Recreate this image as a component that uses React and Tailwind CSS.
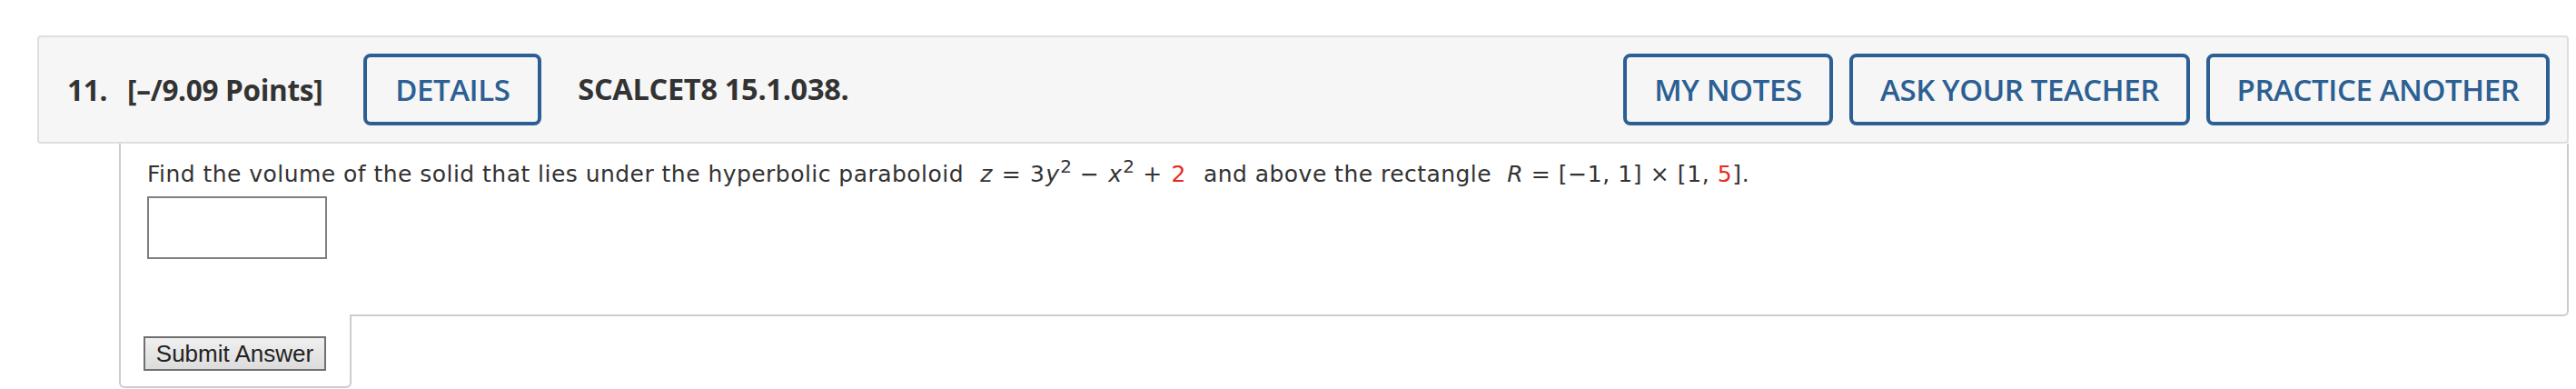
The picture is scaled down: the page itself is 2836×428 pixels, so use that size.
import React from "react";

const blueBtn =
  "flex items-center justify-center h-[79px] border-[4px] border-[#2c5f93] rounded-[8px] text-[#2c5f93] font-semibold text-[33px] tracking-[-0.4px] bg-[#f6f6f6]";

export default function App() {
  return (
    <div className="w-[2836px] h-[428px] overflow-hidden bg-white pt-[39px] pl-[41px] pr-[8px]">
      {/* Header */}
      <div
        className="h-[119px] border-2 border-[#dedede] rounded-[4px] bg-[#f6f6f6] flex items-center pl-[31px] pr-[19px] text-[#333333]"
        style={{ fontFamily: '"Open Sans", sans-serif' }}
      >
        <span className="font-bold text-[31.5px] tracking-[-0.3px]">11.</span>
        <span className="font-bold text-[31.5px] tracking-[-0.3px] ml-[22px]">[–/9.09 Points]</span>
        <div className={`${blueBtn} w-[196px] ml-[45px]`}>DETAILS</div>
        <span className="font-bold text-[32.5px] tracking-[-0.3px] ml-[40px]">SCALCET8 15.1.038.</span>
        <div className="ml-auto flex items-center gap-[18px]">
          <div className={`${blueBtn} w-[231px]`}>MY NOTES</div>
          <div className={`${blueBtn} w-[375px]`}>ASK YOUR TEACHER</div>
          <div className={`${blueBtn} w-[378px]`}>PRACTICE ANOTHER</div>
        </div>
      </div>

      {/* Body */}
      <div className="ml-[90px]" style={{ fontFamily: '"DejaVu Sans", Verdana, sans-serif' }}>
        <div className="h-[190px] border-x-2 border-b-2 border-[#cccccc] rounded-br-[6px] pl-[29px] pt-[14px] text-[#333333] text-[25px] tracking-[0.46px]">
          <p className="leading-[40px]">
            Find the volume of the solid that lies under the hyperbolic paraboloid
            <span className="whitespace-pre tracking-[1.2px]">
              {"  "}
              <i>z</i> = 3<i>y</i>
              <sup className="text-[20px] tracking-normal">2</sup> − <i>x</i>
              <sup className="text-[20px] tracking-normal">2</sup> + <span className="text-[#e8291c]">2</span>
              {"  "}
            </span>
            and above the rectangle
            <span className="whitespace-pre tracking-[0.6px]">
              {"  "}
              <i>R</i> = [−1, 1] × [1, <span className="text-[#e8291c]">5</span>].
            </span>
          </p>
          <div className="mt-[4px] w-[198px] h-[69px] border-2 border-[#808080] bg-white" />
        </div>
        <div className="relative -mt-[2px] w-[256px] h-[81px] bg-white border-x-2 border-b-2 border-[#cccccc] rounded-b-[6px] pl-[25px] pt-[24px]">
          <div
            className="w-[201px] h-[38px] border-2 border-[#707070] bg-gradient-to-b from-[#f0f0f0] to-[#dcdcdc] flex items-center justify-center text-[26px] text-[#222222]"
            style={{ fontFamily: '"Liberation Sans", Arial, sans-serif' }}
          >
            Submit Answer
          </div>
        </div>
      </div>
    </div>
  );
}
